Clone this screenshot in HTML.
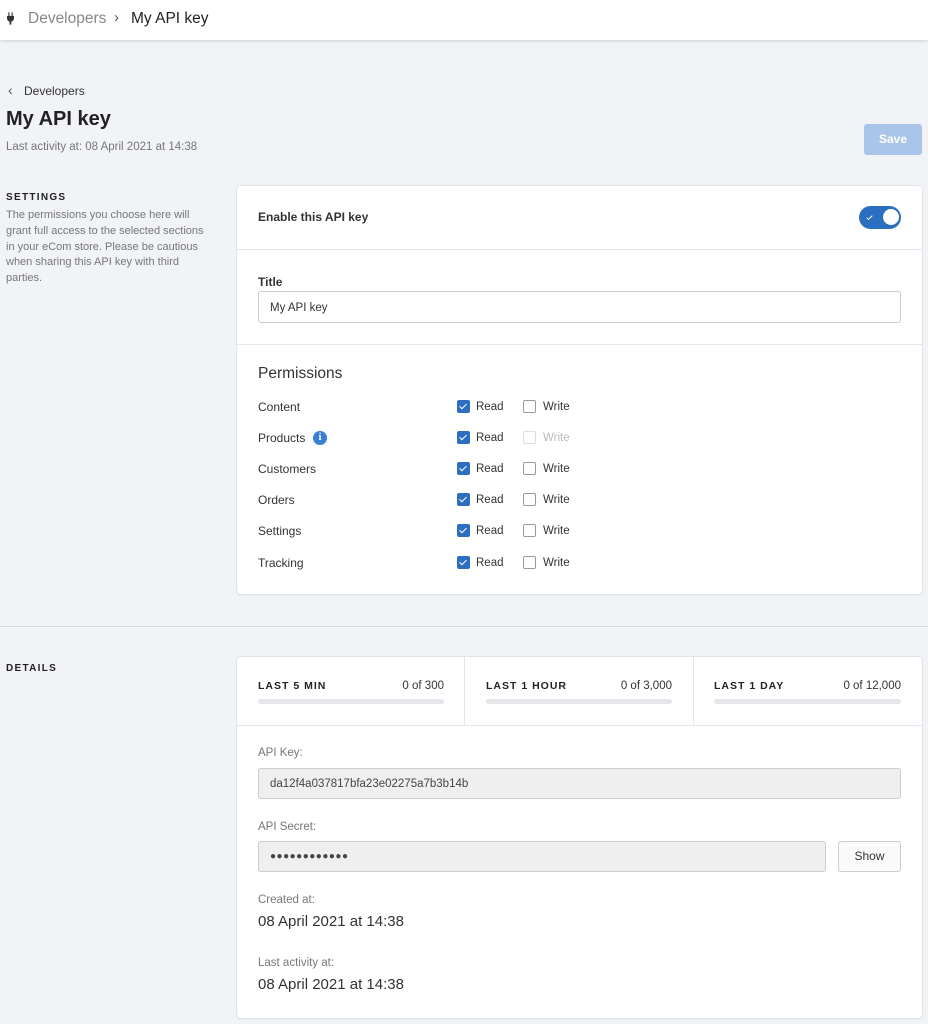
<!DOCTYPE html>
<html><head><style>
*{box-sizing:border-box;margin:0;padding:0}
body{width:928px;height:1024px;background:#f1f3f6;font-family:"Liberation Sans",sans-serif;position:relative;overflow:hidden;color:#333}
.a{position:absolute;white-space:nowrap}
.hdr{position:absolute;left:0;top:0;width:928px;height:40px;background:#fff;box-shadow:0 1px 3px rgba(0,0,0,.15)}
.card{position:absolute;left:237px;width:685px;background:#fff;border-radius:4px;box-shadow:0 0 0 1px #e1e4e8,0 1px 2px rgba(0,0,0,.08)}
.hl{position:absolute;left:0;right:0;height:1px;background:#e3e6ea}
.cb{position:absolute;width:13px;height:13px;border-radius:2px}
.on{background:#2c6fc0}
.off{border:1px solid #9a9a9a;background:#fff}
.dis{border:1px solid #ddd;background:#fff}
.cb.on:after{content:"";position:absolute;left:4px;top:1.5px;width:3px;height:6px;border:solid #fff;border-width:0 1.6px 1.6px 0;transform:rotate(45deg)}
.lbl{font-size:12px;color:#333}
.sm{font-size:11.5px}
.bar{position:absolute;height:5px;background:#e4e6ea;border-radius:3px}
.inp{position:absolute;border:1px solid #ccc;border-radius:3px}
</style></head><body>
<div class="hdr">
<svg class="a" style="left:7px;top:12px" width="7" height="13" viewBox="0 0 8 14"><rect x="1.5" y="0" width="1.3" height="4" fill="#333"/><rect x="5.2" y="0" width="1.3" height="4" fill="#333"/><path d="M0 4h8v3a4 4 0 0 1-3 3.5V14H3v-3.5A4 4 0 0 1 0 7z" fill="#333"/></svg>
<div class="a" style="left:28px;top:10px;font-size:15.5px;color:#888">Developers</div>
<div class="a" style="left:114px;top:9px;font-size:15px;color:#555">&#8250;</div>
<div class="a" style="left:131px;top:10px;font-size:15.5px;color:#222">My API key</div>
</div>
<div class="a" style="left:8px;top:82px;font-size:14px;color:#555">&#8249;</div>
<div class="a" style="left:24px;top:84px;font-size:12px;color:#333">Developers</div>
<div class="a" style="left:6px;top:108px;font-size:20px;font-weight:bold;color:#222">My API key</div>
<div class="a" style="left:6px;top:141px;font-size:11.5px;color:#777">Last activity at: 08 April 2021 at 14:38</div>
<div class="a" style="left:864px;top:124px;width:58px;height:31px;background:#a9c5e9;border-radius:3px;color:#fff;font-size:12px;font-weight:bold;text-align:center;line-height:31px">Save</div>

<div class="a" style="left:6px;top:192px;font-size:10px;font-weight:bold;letter-spacing:1.3px;color:#222">SETTINGS</div>
<div class="a" style="left:6px;top:208px;font-size:11px;line-height:15.8px;color:#777;white-space:normal;width:206px">The permissions you choose here will grant full access to the selected sections in your eCom store. Please be cautious when sharing this API key with third parties.</div>

<div class="card" style="top:186px;height:408px">
<div class="a lbl" style="left:21px;top:24px;font-weight:bold;font-size:12px">Enable this API key</div>
<div class="a" style="left:622px;top:20px;width:42px;height:23px;background:#2c6fc0;border-radius:12px"></div>
<div class="a" style="left:631px;top:28px;width:3px;height:6px;border:solid #fff;border-width:0 1.6px 1.6px 0;transform:rotate(45deg)"></div>
<div class="a" style="left:646px;top:23px;width:16px;height:16px;background:#fff;border-radius:50%"></div>
<div class="hl" style="top:63px"></div>
<div class="a lbl" style="left:21px;top:89px;font-weight:bold">Title</div>
<div class="inp" style="left:21px;top:105px;width:643px;height:32px;border-color:#ccc"></div>
<div class="a sm" style="left:33px;top:116px">My API key</div>
<div class="hl" style="top:158px"></div>
<div class="a" style="left:21px;top:179px;font-size:15.5px;color:#333">Permissions</div>
<div class="a lbl" style="left:21px;top:214px">Content</div>
<div class="a lbl" style="left:21px;top:245px">Products</div>
<div class="a" style="left:76px;top:245px;width:14px;height:14px;border-radius:50%;background:#3a7fd0;color:#fff;font-size:10px;font-weight:bold;text-align:center;line-height:14px;font-family:'Liberation Serif',serif">i</div>
<div class="a lbl" style="left:21px;top:276px">Customers</div>
<div class="a lbl" style="left:21px;top:307px">Orders</div>
<div class="a lbl" style="left:21px;top:338px">Settings</div>
<div class="a lbl" style="left:21px;top:370px">Tracking</div>
<div class="cb on" style="left:220px;top:214px"></div><div class="a sm" style="left:239px;top:215px">Read</div>
<div class="cb off" style="left:286px;top:214px"></div><div class="a sm" style="left:306px;top:215px">Write</div>
<div class="cb on" style="left:220px;top:245px"></div><div class="a sm" style="left:239px;top:246px">Read</div>
<div class="cb dis" style="left:286px;top:245px"></div><div class="a sm" style="left:306px;top:246px;color:#bbb">Write</div>
<div class="cb on" style="left:220px;top:276px"></div><div class="a sm" style="left:239px;top:277px">Read</div>
<div class="cb off" style="left:286px;top:276px"></div><div class="a sm" style="left:306px;top:277px">Write</div>
<div class="cb on" style="left:220px;top:307px"></div><div class="a sm" style="left:239px;top:308px">Read</div>
<div class="cb off" style="left:286px;top:307px"></div><div class="a sm" style="left:306px;top:308px">Write</div>
<div class="cb on" style="left:220px;top:338px"></div><div class="a sm" style="left:239px;top:339px">Read</div>
<div class="cb off" style="left:286px;top:338px"></div><div class="a sm" style="left:306px;top:339px">Write</div>
<div class="cb on" style="left:220px;top:370px"></div><div class="a sm" style="left:239px;top:371px">Read</div>
<div class="cb off" style="left:286px;top:370px"></div><div class="a sm" style="left:306px;top:371px">Write</div>
</div>

<div class="a" style="left:0;top:626px;width:928px;height:1px;background:#d5d8dc"></div>
<div class="a" style="left:6px;top:663px;font-size:10px;font-weight:bold;letter-spacing:1.3px;color:#222">DETAILS</div>

<div class="card" style="top:657px;height:361px">
<div class="a" style="left:227px;top:0;width:1px;height:68px;background:#e3e6ea"></div>
<div class="a" style="left:456px;top:0;width:1px;height:68px;background:#e3e6ea"></div>
<div class="hl" style="top:68px"></div>
<div class="a" style="left:21px;top:23px;font-size:10.5px;font-weight:bold;letter-spacing:1px;color:#222">LAST 5 MIN</div>
<div class="a sm" style="right:478px;top:23px">0 of 300</div>
<div class="bar" style="left:21px;top:42px;width:186px"></div>
<div class="a" style="left:249px;top:23px;font-size:10.5px;font-weight:bold;letter-spacing:1px;color:#222">LAST 1 HOUR</div>
<div class="a sm" style="right:250px;top:23px">0 of 3,000</div>
<div class="bar" style="left:249px;top:42px;width:186px"></div>
<div class="a" style="left:477px;top:23px;font-size:10.5px;font-weight:bold;letter-spacing:1px;color:#222">LAST 1 DAY</div>
<div class="a sm" style="right:21px;top:23px">0 of 12,000</div>
<div class="bar" style="left:477px;top:42px;width:187px"></div>
<div class="a sm" style="left:21px;top:90px;color:#777">API Key:</div>
<div class="inp" style="left:21px;top:111px;width:643px;height:31px;background:#efefef"></div>
<div class="a sm" style="left:33px;top:121px;color:#444">da12f4a037817bfa23e02275a7b3b14b</div>
<div class="a sm" style="left:21px;top:164px;color:#777">API Secret:</div>
<div class="inp" style="left:21px;top:184px;width:568px;height:31px;background:#efefef"></div>
<div class="a" style="left:33px;top:194px;color:#444;font-size:10px;letter-spacing:0.5px">●●●●●●●●●●●●</div>
<div class="inp" style="left:601px;top:184px;width:63px;height:31px;background:#fafafa;text-align:center;line-height:29px;font-size:12px;color:#333">Show</div>
<div class="a sm" style="left:21px;top:237px;color:#777">Created at:</div>
<div class="a" style="left:21px;top:256px;font-size:15px;color:#333">08 April 2021 at 14:38</div>
<div class="a sm" style="left:21px;top:300px;color:#777">Last activity at:</div>
<div class="a" style="left:21px;top:319px;font-size:15px;color:#333">08 April 2021 at 14:38</div>
</div>
</body></html>
